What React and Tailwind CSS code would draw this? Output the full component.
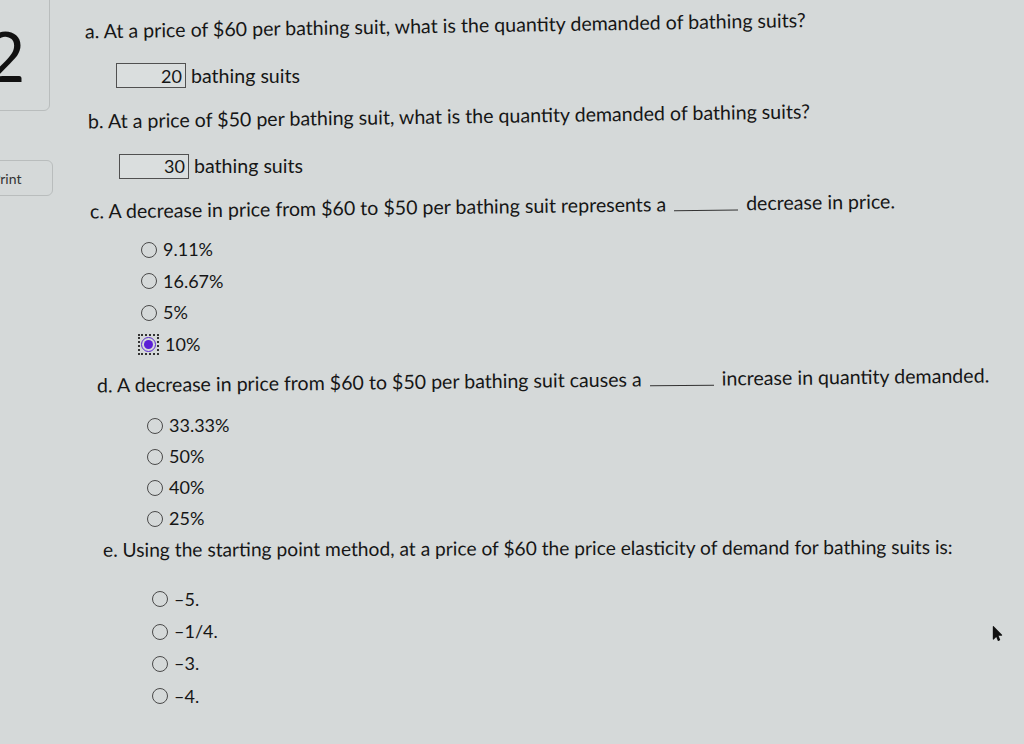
import { FaMousePointer } from "react-icons/fa";

const Radio = ({ checked }) =>
  checked ? (
    <span className="-ml-[3px] flex h-[21px] w-[21px] items-center justify-center border-2 border-dotted border-[#333]">
      <span className="flex h-[15px] w-[15px] items-center justify-center rounded-full border-[1.5px] border-[#5b2ad0]">
        <span className="h-[9px] w-[9px] rounded-full bg-[#5b1fd6]" />
      </span>
    </span>
  ) : (
    <span className="h-[16px] w-[16px] rounded-full border-[1.5px] border-[#4a4a4a]" />
  );

const Options = ({ items, className, rowClass = "h-[31px]", checked }) => (
  <ul className={className}>
    {items.map((label) => (
      <li key={label} className={`flex items-center gap-[6px] ${rowClass}`}>
        <Radio checked={label === checked} />
        <span className="text-[18px]">{label}</span>
      </li>
    ))}
  </ul>
);

const Blank = ({ value }) => (
  <span className="flex h-[25px] w-[70px] items-center justify-end border border-[#505050] bg-[#dadede] pr-[3px] text-[18px] leading-none">
    {value}
  </span>
);

export default function App() {
  return (
    <div className="relative flex h-[744px] w-[1024px] overflow-hidden bg-[#d5d9d9] font-['Lato',sans-serif] text-[#161616]">
      {/* left rail, mostly cut off */}
      <aside className="w-[54px] shrink-0">
        <div className="-mt-[20px] -ml-[40px] flex h-[131px] w-[90px] items-center justify-center rounded-md border border-[#b9bdbd]">
          <span className="mt-[18px] text-[70px] leading-none text-[#111]">2</span>
        </div>
        <div className="mt-[49px] -ml-[40px] flex h-[36px] w-[93px] items-center rounded-md border border-[#b9bdbd] pl-[31px] text-[14px] text-[#333]">
          Print
        </div>
      </aside>

      <main className="flex-1 pt-[20px] text-[19.6px]">
        <p className="origin-left -rotate-[0.9deg] pl-[31px] leading-[24px]">
          a. At a price of $60 per bathing suit, what is the quantity demanded of bathing suits?
        </p>
        <div className="mt-[17px] flex items-center gap-[5px] pl-[62px]">
          <Blank value="20" />
          <span>bathing suits</span>
        </div>

        <p className="mt-[20px] origin-left -rotate-[0.8deg] pl-[34px] leading-[24px]">
          b. At a price of $50 per bathing suit, what is the quantity demanded of bathing suits?
        </p>
        <div className="mt-[17px] flex items-center gap-[5px] pl-[65px]">
          <Blank value="30" />
          <span>bathing suits</span>
        </div>

        <p className="mt-[19px] origin-left -rotate-[0.72deg] pl-[36px] leading-[24px]">
          c. A decrease in price from $60 to $50 per bathing suit represents a
          <span className="mx-[8px] inline-block w-[64px] border-b border-[#333]" />
          decrease in price.
        </p>
        <Options
          className="mt-[10px] pl-[87px]"
          rowClass="h-[31.6px]"
          items={["9.11%", "16.67%", "5%", "10%"]}
          checked="10%"
        />

        <p className="mt-[14px] origin-left -rotate-[0.64deg] pl-[43px] leading-[24px]">
          d. A decrease in price from $60 to $50 per bathing suit causes a
          <span className="mx-[8px] inline-block w-[64px] border-b border-[#333]" />
          increase in quantity demanded.
        </p>
        <Options
          className="mt-[12px] pl-[93px]"
          items={["33.33%", "50%", "40%", "25%"]}
        />

        <p className="mt-[4px] origin-left -rotate-[0.2deg] pl-[49px] text-[19.2px] leading-[24px]">
          e. Using the starting point method, at a price of $60 the price elasticity of demand for bathing suits is:
        </p>
        <Options
          className="mt-[21px] pl-[98px]"
          rowClass="h-[32.3px]"
          items={["–5.", "–1/4.", "–3.", "–4."]}
        />
      </main>

      <FaMousePointer className="absolute top-[626px] left-[990px] text-[15px] text-[#111]" />
    </div>
  );
}
